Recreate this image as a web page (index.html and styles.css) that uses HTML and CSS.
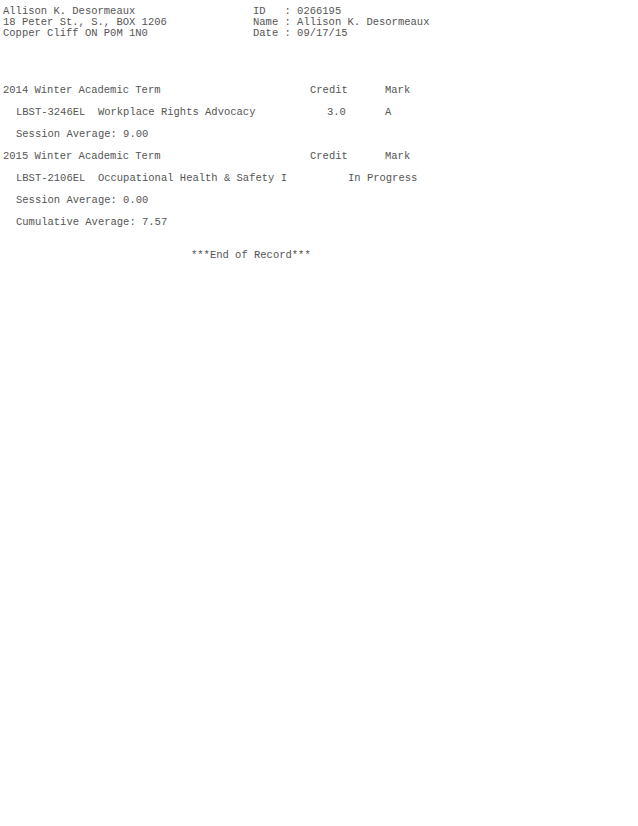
FILE: index.html
```html
<!DOCTYPE html>
<html>
<head>
<meta charset="utf-8">
<link rel="stylesheet" href="styles.css">
</head>
<body>
<div class="page">
  <header class="head">
    <div class="addr">
      <div>Allison K. Desormeaux</div>
      <div>18 Peter St., S., BOX 1206</div>
      <div>Copper Cliff ON P0M 1N0</div>
    </div>
    <div class="ident">
      <div>ID&nbsp;&nbsp;&nbsp;: 0266195</div>
      <div>Name : Allison K. Desormeaux</div>
      <div>Date : 09/17/15</div>
    </div>
  </header>

  <section class="record">
    <div class="row term">
      <span class="label">2014 Winter Academic Term</span>
      <span class="credit">Credit</span>
      <span class="mark">Mark</span>
    </div>
    <div class="row course">
      <span class="label">LBST-3246EL&nbsp;&nbsp;Workplace Rights Advocacy</span>
      <span class="credit val">3.0</span>
      <span class="mark">A</span>
    </div>
    <div class="row sub">Session Average: 9.00</div>
    <div class="row term">
      <span class="label">2015 Winter Academic Term</span>
      <span class="credit">Credit</span>
      <span class="mark">Mark</span>
    </div>
    <div class="row course">
      <span class="label">LBST-2106EL&nbsp;&nbsp;Occupational Health &amp; Safety I</span>
      <span class="progress">In Progress</span>
    </div>
    <div class="row sub">Session Average: 0.00</div>
    <div class="row sub">Cumulative Average: 7.57</div>
    <div class="end">***End of Record***</div>
  </section>
</div>
</body>
</html>
```

FILE: styles.css
```css
html, body {
  margin: 0;
  padding: 0;
  background: #ffffff;
}

.page {
  font-family: "Liberation Mono", "Courier New", monospace;
  font-size: 10.5px;
  color: #555555;
  padding: 6px 0 0 3px;
}

.head {
  display: flex;
  line-height: 11px;
}

.addr {
  width: 250px;
}

.record {
  margin-top: 40px;
}

.row {
  display: flex;
  height: 22px;
  align-items: center;
  white-space: pre;
}

.term .label {
  width: 307px;
}

.course,
.sub {
  padding-left: 13px;
}

.course .label {
  width: 294px;
}

.credit {
  width: 75px;
}

.credit.val {
  padding-left: 17px;
  width: 58px;
}

.progress {
  padding-left: 38px;
}

.end {
  margin-top: 11px;
  height: 22px;
  line-height: 22px;
  padding-left: 188px;
}
```
